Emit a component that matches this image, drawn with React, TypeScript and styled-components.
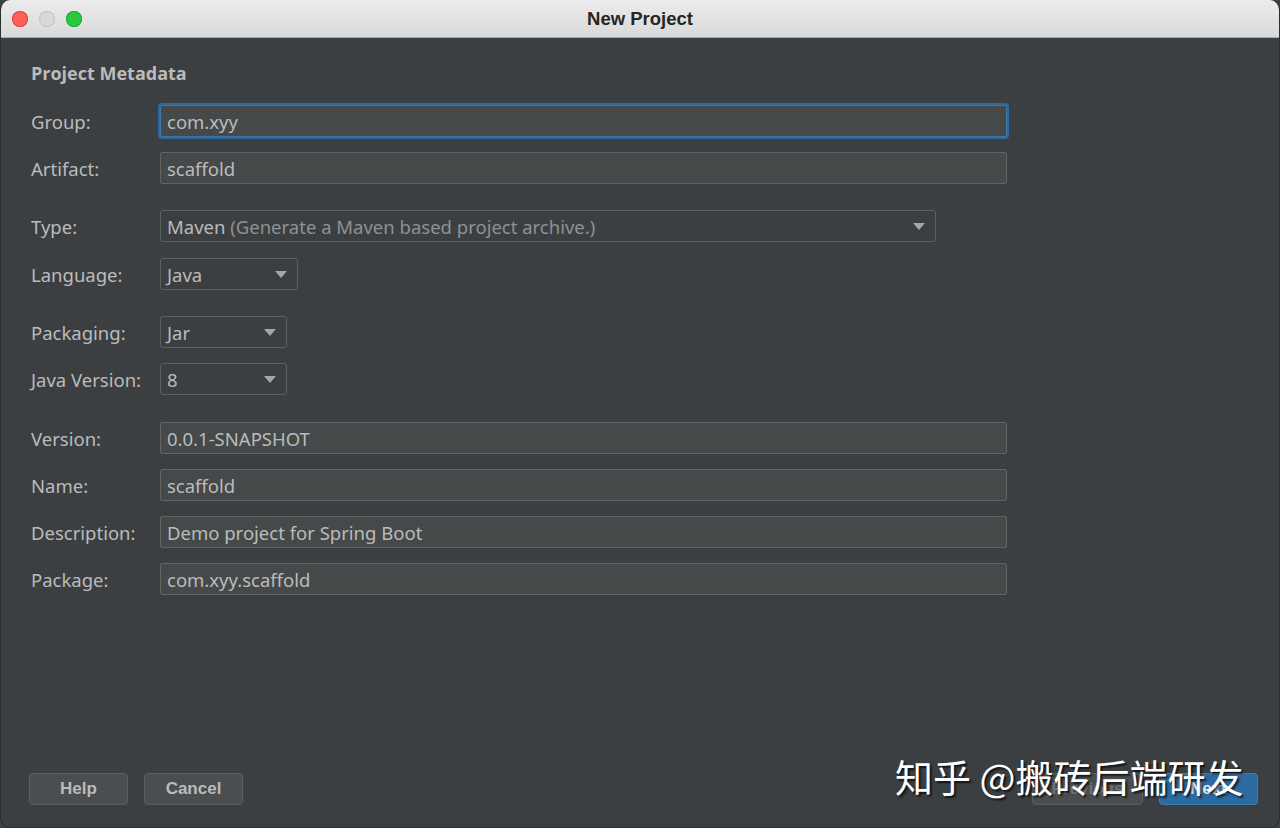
import styled, { createGlobalStyle, css } from "styled-components";

const GlobalStyle = createGlobalStyle`
  html, body {
    margin: 0;
    padding: 0;
    background: #3c3f41;
  }
  #root {
    height: 100vh;
  }
`;

type FieldProps = {
  width?: number;
  focused?: boolean;
};

type RowProps = {
  gap?: number;
};

const App = () => {
  return (
    <>
      <GlobalStyle />
      <Window>
        <TitleBar>
          <Lights>
            <Light color="#fe5f57" edge="#e1463f" />
            <Light color="#d9d9d9" edge="#c4c4c4" />
            <Light color="#28c840" edge="#1aab29" />
          </Lights>
          <Title>New Project</Title>
        </TitleBar>

        <Content>
          <Heading>Project Metadata</Heading>
          <Form>
            <Row gap={0}>
              <Label>Group:</Label>
              <Field focused>com.xyy</Field>
            </Row>
            <Row>
              <Label>Artifact:</Label>
              <Field>scaffold</Field>
            </Row>
            <Row gap={26}>
              <Label>Type:</Label>
              <Select width={776}>
                <span>
                  Maven <Hint>(Generate a Maven based project archive.)</Hint>
                </span>
                <Arrow />
              </Select>
            </Row>
            <Row gap={16}>
              <Label>Language:</Label>
              <Select width={138}>
                <span>Java</span>
                <Arrow />
              </Select>
            </Row>
            <Row gap={26}>
              <Label>Packaging:</Label>
              <Select width={127}>
                <span>Jar</span>
                <Arrow />
              </Select>
            </Row>
            <Row>
              <Label>Java Version:</Label>
              <Select width={127}>
                <span>8</span>
                <Arrow />
              </Select>
            </Row>
            <Row gap={27}>
              <Label>Version:</Label>
              <Field>0.0.1-SNAPSHOT</Field>
            </Row>
            <Row>
              <Label>Name:</Label>
              <Field>scaffold</Field>
            </Row>
            <Row>
              <Label>Description:</Label>
              <Field>Demo project for Spring Boot</Field>
            </Row>
            <Row>
              <Label>Package:</Label>
              <Field>com.xyy.scaffold</Field>
            </Row>
          </Form>
        </Content>

        <Footer>
          <ButtonGroup>
            <Button>Help</Button>
            <Button>Cancel</Button>
          </ButtonGroup>
          <ButtonGroup>
            <Button disabled wide>
              Previous
            </Button>
            <Button primary>Next</Button>
          </ButtonGroup>
        </Footer>

        <Watermark>知乎 @搬砖后端研发</Watermark>
      </Window>
    </>
  );
};

export default App;

const Window = styled.div`
  position: relative;
  height: 100%;
  display: flex;
  flex-direction: column;
  background: #3c3f41;
  border-radius: 10px;
  overflow: hidden;
  font-family: "Noto Sans", "Open Sans", sans-serif;
  color: #bbbbbb;
  box-sizing: border-box;
  border: 1px solid #2b2d2e;
  border-top: none;
`;

const TitleBar = styled.div`
  position: relative;
  height: 38px;
  flex-shrink: 0;
  display: flex;
  align-items: center;
  justify-content: center;
  background: linear-gradient(#ececec, #d9d9d9);
  border-bottom: 1px solid #a9a9a9;
  box-sizing: border-box;
`;

const Lights = styled.div`
  position: absolute;
  left: 11px;
  top: 11px;
  display: flex;
  gap: 11px;
`;

const Light = styled.span<{ color: string; edge: string }>`
  width: 16px;
  height: 16px;
  border-radius: 50%;
  background: ${(p) => p.color};
  box-shadow: inset 0 0 0 1px ${(p) => p.edge};
`;

const Title = styled.div`
  font-family: "Liberation Sans", Arial, sans-serif;
  font-weight: bold;
  font-size: 18.5px;
  color: #262626;
`;

const Content = styled.div`
  flex: 1;
  display: flex;
  flex-direction: column;
  padding: 22px 0 0 30px;
`;

const Heading = styled.div`
  font-family: "Open Sans", sans-serif;
  font-weight: bold;
  font-size: 18px;
  line-height: 26px;
  color: #bbbbbb;
`;

const Form = styled.div`
  display: flex;
  flex-direction: column;
  margin-top: 19px;
`;

const Row = styled.div<RowProps>`
  display: grid;
  grid-template-columns: 129px auto;
  align-items: center;
  height: 32px;
  margin-top: ${(p) => p.gap ?? 15}px;
`;

const Label = styled.div`
  font-size: 18.5px;
  color: #bbbbbb;
`;

const boxStyle = css`
  box-sizing: border-box;
  height: 32px;
  display: flex;
  align-items: center;
  padding: 0 6px;
  background: #45494a;
  border: 1px solid #646464;
  border-radius: 2px;
  font-size: 18.5px;
  color: #bbbbbb;
`;

const Field = styled.div<FieldProps>`
  ${boxStyle}
  width: 847px;
  ${(p) =>
    p.focused &&
    css`
      border-color: #3f77a8;
      box-shadow: 0 0 0 2px #2b6a9e;
    `}
`;

const Select = styled.div<FieldProps>`
  ${boxStyle}
  width: ${(p) => p.width}px;
  justify-content: space-between;
  padding-right: 10px;
  background: #3c3f41;
  border-color: #5e6060;
  border-radius: 3px;
`;

const Hint = styled.span`
  color: #8f9193;
`;

const Arrow = styled.span`
  width: 0;
  height: 0;
  border-left: 6px solid transparent;
  border-right: 6px solid transparent;
  border-top: 7px solid #a3a5a6;
`;

const Footer = styled.div`
  display: flex;
  justify-content: space-between;
  padding: 0 21px 22px 28px;
`;

const ButtonGroup = styled.div`
  display: flex;
  gap: 16px;
`;

const Button = styled.button<{ primary?: boolean; wide?: boolean }>`
  box-sizing: border-box;
  width: ${(p) => (p.wide ? 111 : 99)}px;
  height: 32px;
  border-radius: 4px;
  border: 1px solid ${(p) => (p.primary ? "#3c7fb7" : "#5b5e60")};
  background: ${(p) => (p.primary ? "#2d6a9f" : "#4a4e50")};
  color: ${(p) => (p.primary ? "#e0e0e0" : p.disabled ? "#6f7274" : "#bbbbbb")};
  font-family: "Liberation Sans", Arial, sans-serif;
  font-weight: bold;
  font-size: 17px;
  padding: 0;
`;

const Watermark = styled.div`
  position: absolute;
  left: 894px;
  top: 748px;
  font-family: "Noto Sans CJK SC", sans-serif;
  font-size: 38px;
  color: #ffffff;
  text-shadow: 2px 2px 2px rgba(0, 0, 0, 0.7);
  white-space: nowrap;
`;
